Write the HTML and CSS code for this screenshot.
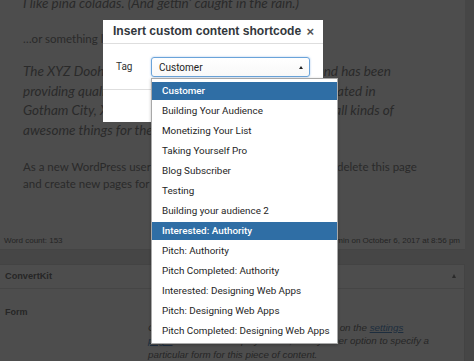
FILE: index.html
```html
<!DOCTYPE html>
<html>
<head>
<meta charset="utf-8">
<link rel="stylesheet" href="styles.css">
</head>
<body>
<div class="page">
  <div class="editor">
    <p class="quote first">I like piña coladas. (And gettin’ caught in the rain.)</p>
    <p class="plain or">…or something like this:</p>
    <p class="quote">The XYZ Doohickey Company was founded in 1971, and has been<br>providing quality doohickeys to the public ever since. Located in<br>Gotham City, XYZ employs over 2,000 people and does all kinds of<br>awesome things for the Gotham community.</p>
    <p class="plain last">As a new WordPress user, you should go to your dashboard to delete this page<br>and create new pages for your content. Have fun!</p>
  </div>
  <div class="status">
    <span>Word count: 153</span>
    <span>Last edited by admin on October 6, 2017 at 8:56 pm</span>
  </div>
  <section class="panel">
    <div class="panel-head">
      <span class="panel-title">ConvertKit</span>
      <span class="toggle"></span>
    </div>
    <div class="panel-body">
      <div class="label">Form</div>
      <div class="field">
        <div class="select-ph"></div>
        <p class="desc">Choose Default to use the form which is set on the <a href="#">settings</a><br><a href="#">page.</a> None to not display a form, or any other option to specify a<br>particular form for this piece of content.</p>
      </div>
    </div>
  </section>

  <div class="modal">
    <div class="modal-head">
      <span class="modal-title">Insert custom content shortcode</span>
      <span class="close">×</span>
    </div>
    <div class="modal-body">
      <span class="tag-label">Tag</span>
      <div class="select-wrap">
        <div class="select">
          <span>Customer</span>
          <span class="arrow"></span>
        </div>
        <ul class="dropdown">
          <li class="active">Customer</li>
          <li>Building Your Audience</li>
          <li>Monetizing Your List</li>
          <li>Taking Yourself Pro</li>
          <li>Blog Subscriber</li>
          <li>Testing</li>
          <li>Building your audience 2</li>
          <li class="active">Interested: Authority</li>
          <li>Pitch: Authority</li>
          <li>Pitch Completed: Authority</li>
          <li>Interested: Designing Web Apps</li>
          <li>Pitch: Designing Web Apps</li>
          <li>Pitch Completed: Designing Web Apps</li>
        </ul>
      </div>
    </div>
    <div class="modal-foot"></div>
  </div>
</div>
</body>
</html>
```

FILE: styles.css
```css
* { box-sizing: border-box; }
html, body { margin: 0; padding: 0; }
body { background: #464646; }

.page {
  position: relative;
  width: 474px;
  height: 361px;
  overflow: hidden;
  background: #464646;
  font-family: "Liberation Sans", Arial, sans-serif;
  color: #2a2a2a;
}

.editor {
  width: 465px;
  background: #4d4d4d;
  padding: 0 0 41px 23px;
  white-space: nowrap;
}
.editor p { margin: 0; }
.quote {
  font-family: Lato, "Liberation Sans", sans-serif;
  font-style: italic;
  font-size: 13.5px;
  line-height: 19.5px;
  margin-top: 15.75px !important;
}
.quote.first { margin-top: -5.75px !important; }
.plain {
  font-family: Lato, "Liberation Sans", sans-serif;
  font-size: 11.5px;
  line-height: 17px;
}
.plain.or { margin-top: 15.75px !important; }
.plain.last { margin-top: 17.25px !important; }

.status {
  width: 465px;
  height: 17px;
  display: flex;
  justify-content: space-between;
  align-items: center;
  padding: 0 5px 0 4px;
  font-size: 8px;
  background: #4d4d4d;
  border-bottom: 1px solid #444;
  color: #242424;
}

.panel {
  margin-top: 14px;
  width: 465px;
  background: #4d4d4d;
  border: 1px solid #434343;
  border-left: none;
}
.panel-head {
  height: 24px;
  display: flex;
  align-items: center;
  justify-content: space-between;
  padding: 0 8px 0 5px;
  border-bottom: 1px solid #454545;
}
.panel-title { font-weight: bold; font-size: 9.2px; color: #262626; }
.toggle {
  width: 0; height: 0;
  border-left: 2.5px solid transparent;
  border-right: 2.5px solid transparent;
  border-bottom: 4px solid #2a2a2a;
}
.panel-body {
  display: grid;
  grid-template-columns: 143px 1fr;
  padding: 16px 0 0 5px;
}
.label { font-weight: bold; font-size: 9px; color: #262626; line-height: 14px; }
.select-ph { height: 16px; }
.desc {
  margin: 0;
  font-style: italic;
  font-size: 9.8px;
  line-height: 13.5px;
  white-space: nowrap;
  color: #262626;
}
.desc a { color: #1d2d3e; }

/* modal */
.modal {
  position: absolute;
  left: 103px;
  top: 20px;
  width: 220px;
  height: 102px;
  background: #fff;
  display: flex;
  flex-direction: column;
}
.modal-head {
  height: 24px;
  display: flex;
  align-items: center;
  justify-content: space-between;
  padding: 0 9px 1px 10px;
  border-bottom: 1px solid #dedede;
}
.modal-title { font-weight: bold; font-size: 12.1px; color: #32373c; }
.close { font-weight: bold; font-size: 13px; color: #555; line-height: 1; }
.modal-body {
  height: 46px;
  display: flex;
  align-items: flex-start;
  padding: 13px 13px 0 13px;
  border-bottom: 1px solid #dedede;
}
.tag-label {
  width: 35px;
  font-family: Roboto, "Liberation Sans", sans-serif;
  font-size: 10px;
  line-height: 20px;
  color: #333;
}
.select-wrap { position: relative; width: 159px; }
.select {
  height: 20px;
  border: 1px solid #6aa3d9;
  border-radius: 3px;
  box-shadow: 0 0 2px rgba(90, 150, 215, 0.6);
  display: flex;
  align-items: center;
  justify-content: space-between;
  padding: 0 6px 0 7px;
  font-family: Roboto, "Liberation Sans", sans-serif;
  font-size: 10px;
  color: #222;
  background: linear-gradient(#fff, #f8f8f8);
}
.arrow {
  width: 0; height: 0;
  border-left: 2px solid transparent;
  border-right: 2px solid transparent;
  border-bottom: 3px solid #222;
}
.modal-foot { flex: 1; }

.dropdown {
  position: absolute;
  left: 0;
  top: 21px;
  width: 187px;
  height: 266px;
  margin: 0;
  padding: 3px 0;
  list-style: none;
  background: #fff;
  border: 1px solid #a8a8a8;
  box-shadow: 0 1px 3px rgba(0,0,0,0.25);
  display: flex;
  flex-direction: column;
  gap: 2px;
}
.dropdown li {
  height: 18px;
  line-height: 18px;
  padding-left: 10px;
  font-family: Roboto, "Liberation Sans", sans-serif;
  font-size: 9.85px;
  color: #1e1e1e;
  white-space: nowrap;
}
.dropdown li.active {
  background: #2f6ea5;
  color: #fff;
  font-weight: 500;
}
```
